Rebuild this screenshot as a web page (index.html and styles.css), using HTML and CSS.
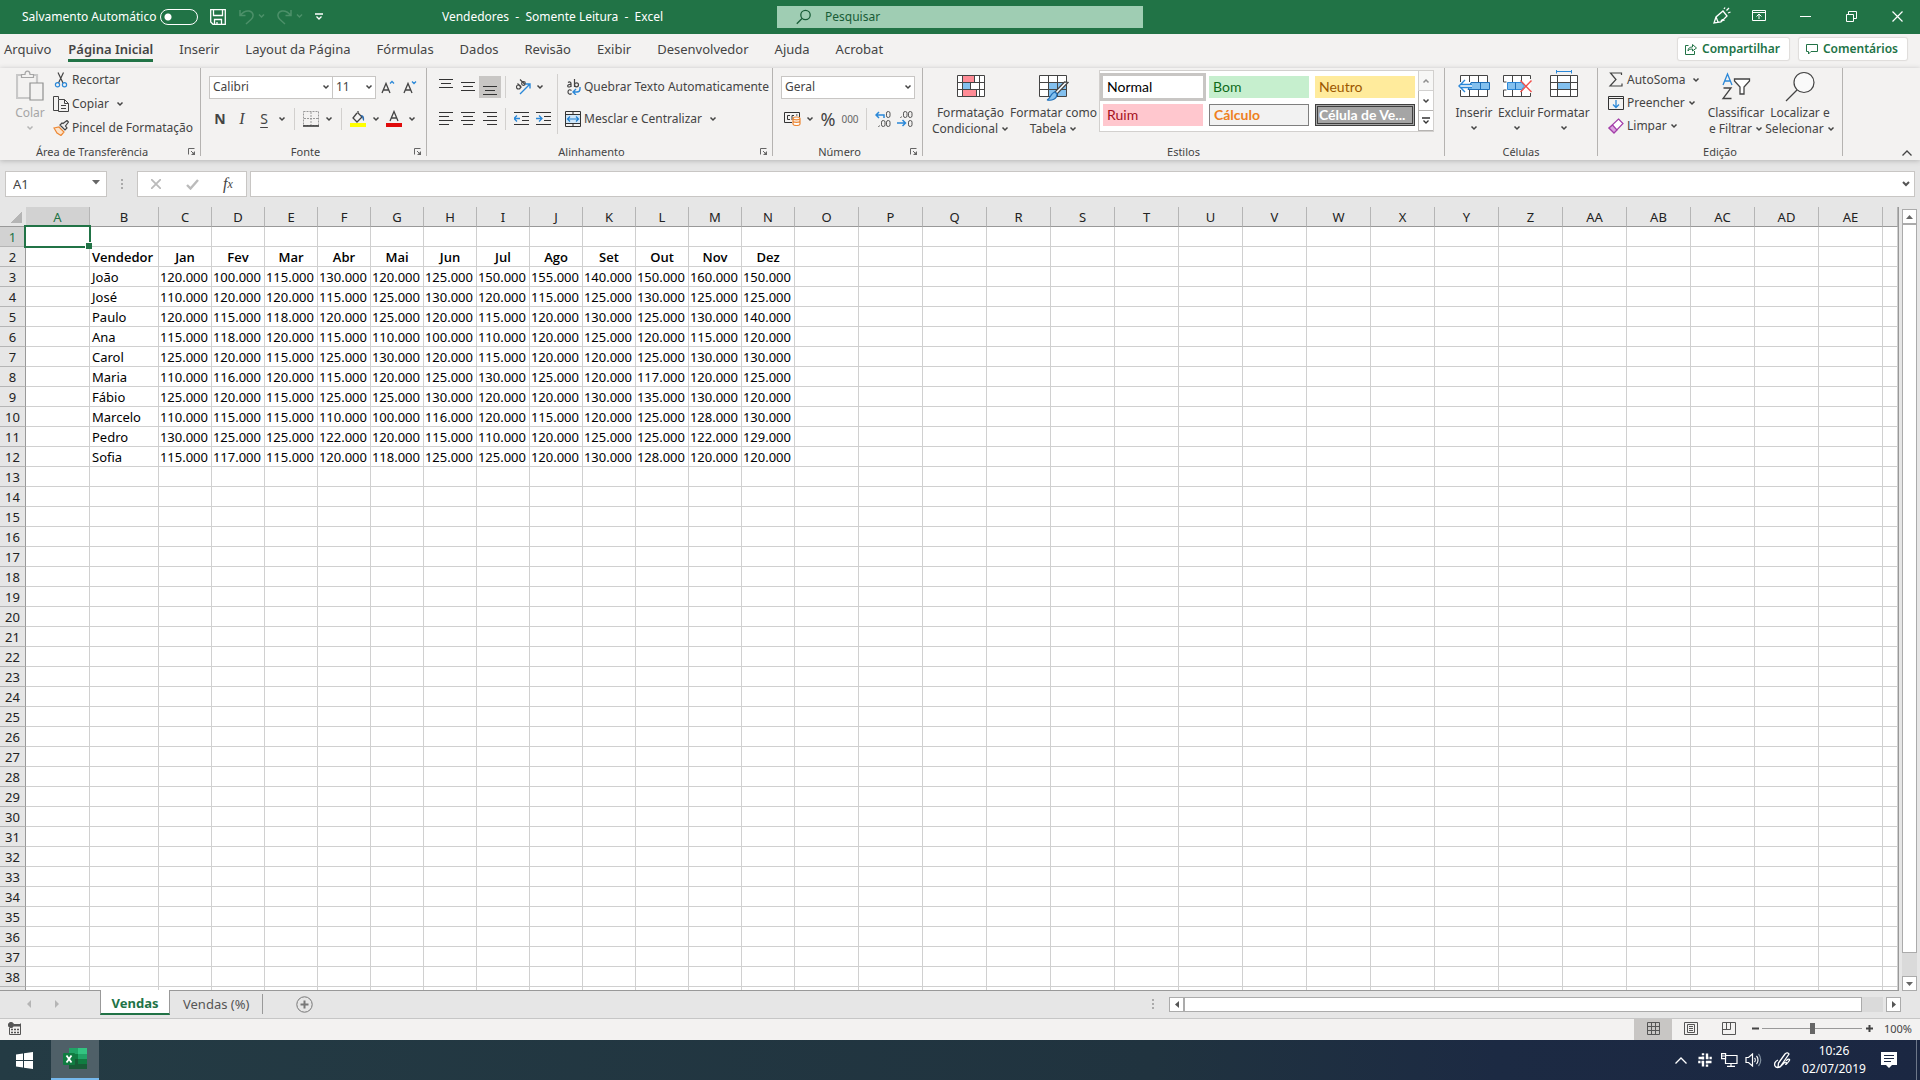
FILE: index.html
```html
<!DOCTYPE html>
<html lang="pt-BR">
<head>
<meta charset="utf-8">
<title>Vendedores - Somente Leitura - Excel</title>
<link rel="stylesheet" href="styles.css">
</head>
<body>
<svg class="sprite" aria-hidden="true">
  <symbol id="chev" viewBox="0 0 8 8"><path d="M1.5 2.5 4 5l2.500-2.500" fill="none" stroke="currentColor" stroke-width="1.500"/></symbol>
  <symbol id="launcher" viewBox="0 0 8 8"><path d="M.5 6.500v-6h6M3 3l3 3" fill="none" stroke="currentColor"/><path d="M7 3v4H3z" fill="currentColor"/></symbol>
</svg>

<header class="titlebar">
  <div class="title-left">
    <label class="autosave">Salvamento Automático <input type="checkbox" class="switch"></label>
    <button class="tb-btn" aria-label="Salvar"><svg width="16" height="16" viewBox="0 0 16 16" fill="none" stroke="currentColor" stroke-width="1.300"><path d="M.7.7h14.600v14.600H3L.7 13zM3.500 1v5.500h9V1M4.500 15v-4.500h7V15M7 15v-2"/></svg></button>
    <button class="tb-btn dim" aria-label="Desfazer"><svg width="26" height="16" viewBox="0 0 26 16" fill="none" stroke="currentColor" stroke-width="1.500"><path d="M1 1v5.500h5.500M1.500 6C4 3 7 1.500 10 2c5 1 5 6 2 8.500L7 15M20 5.500l2.500 2.500L25 5.500"/></svg></button>
    <button class="tb-btn dim" aria-label="Refazer"><svg width="26" height="16" viewBox="0 0 26 16" fill="none" stroke="currentColor" stroke-width="1.500"><path d="M14 1v5.500H8.500M13.500 6C11 3 8 1.500 5 2c-5 1-5 6-2 8.500L8 15M20 5.500l2.500 2.500L25 5.500"/></svg></button>
    <button class="tb-btn" aria-label="Personalizar"><svg width="8" height="8" viewBox="0 0 8 8" fill="none" stroke="currentColor" stroke-width="1.300"><path d="M0 1h8M1.500 3.500 4 6l2.500-2.500"/></svg></button>
    <h1 class="doc-title">Vendedores  -  Somente Leitura  -  Excel</h1>
  </div>
  <label class="search">
    <svg width="16" height="16" viewBox="0 0 16 16" fill="none" stroke="currentColor" stroke-width="1.300"><circle cx="9.500" cy="6" r="4.700"/><path d="M6 9.500.8 14.700"/></svg>
    <input type="text" placeholder="Pesquisar" aria-label="Pesquisar">
  </label>
  <div class="title-right">
    <button class="win-btn pen" aria-label="Novidades"><svg width="18" height="18" viewBox="0 0 18 18" fill="none" stroke="currentColor" stroke-width="1.300"><path d="m1 16 2-6 7-6 4 5-6 6zM3 10l2 5M8 15c0-3 3-3 3-1M11 2l1-1.500M13.500 3.500 16 1M15 6l2.500-1"/></svg></button>
    <button class="win-btn" aria-label="Opções da Faixa de Opções"><svg width="14" height="12" viewBox="0 0 14 12" fill="none" stroke="currentColor"><path d="M.5.5h13v10H.5zM.5 2.500h13M7 9V4M4.500 6.500 7 4l2.500 2.500"/></svg></button>
    <button class="win-btn" aria-label="Minimizar"><svg width="11" height="11" viewBox="0 0 11 11" stroke="currentColor"><path d="M0 5.500h11"/></svg></button>
    <button class="win-btn" aria-label="Restaurar"><svg width="11" height="11" viewBox="0 0 11 11" fill="none" stroke="currentColor"><path d="M.5 3.500h7v7h-7zM2.500 3V.500h8v7H8"/></svg></button>
    <button class="win-btn" aria-label="Fechar"><svg width="11" height="11" viewBox="0 0 11 11" stroke="currentColor" stroke-width="1.200"><path d="m.5.5 10 10m0-10-10 10"/></svg></button>
  </div>
</header>

<nav class="tabs">
  <button class="tab">Arquivo</button>
  <button class="tab active">Página Inicial</button>
  <button class="tab">Inserir</button>
  <button class="tab">Layout da Página</button>
  <button class="tab">Fórmulas</button>
  <button class="tab">Dados</button>
  <button class="tab">Revisão</button>
  <button class="tab">Exibir</button>
  <button class="tab">Desenvolvedor</button>
  <button class="tab">Ajuda</button>
  <button class="tab">Acrobat</button>
  <div class="tab-actions">
    <button class="pill"><svg width="12" height="12" viewBox="0 0 12 12" fill="none" stroke="currentColor"><path d="M3.500 2.500h-3v9h9V8M3 8c0-3 2-4 4.500-4V1.500l4 3.500-4 3V6C5 6 4 6.500 3 8z"/></svg>Compartilhar</button>
    <button class="pill"><svg width="12" height="12" viewBox="0 0 12 12" fill="none" stroke="currentColor"><path d="M.5 1.500h11v7H5L2.500 11V8.500h-2z"/></svg>Comentários</button>
  </div>
</nav>

<section class="ribbon" aria-label="Página Inicial">
  <div class="group g-clip">
    <div class="group-body">
      <button class="big paste" disabled>
        <svg width="28" height="32" viewBox="0 0 28 32" fill="#f3f2f1" stroke="#a6a6a6" stroke-width="1.200"><path d="M1 5h20v23H1z" stroke-width="2.200" stroke="#c8c8c8"/><path d="M5.500 7.500V4.500H9C9 0 14 0 14 4.500h3.500v3z"/><path d="M14 13h13v17H14z" stroke="#8f8f8f"/></svg>
        <span>Colar</span><svg class="chev"><use href="#chev"/></svg>
      </button>
      <div class="stack">
        <button class="cmd"><svg width="16" height="16" viewBox="0 0 16 16" fill="none" stroke="#444" stroke-width="1.200"><path d="M5 .5 10 11M10.500.500 5.500 11"/><g stroke="#2b88d8"><circle cx="4.500" cy="12.800" r="2.100"/><circle cx="11.500" cy="12.800" r="2.100"/></g></svg>Recortar</button>
        <button class="cmd"><svg width="16" height="16" viewBox="0 0 16 16" fill="none" stroke="#444"><path d="M5.500 3V.500h-5v14h5M5.500 3.500h6l4 4v8h-10zM11.500 3.500v4h4M8 9.500h5M8 12.500h5"/></svg>Copiar<svg class="chev gap"><use href="#chev"/></svg></button>
        <button class="cmd"><svg width="16" height="16" viewBox="0 0 16 16"><path d="m1 8 5-1 5 5-3 3.500L4 13z" fill="#fbe3cb" stroke="#ed8733" stroke-width="1.200"/><path d="m7 5 5 5 2-2-1.500-2 3-4-1.500-1.500-4 3L9 3z" fill="#eee" stroke="#444" stroke-width="1.200"/></svg>Pincel de Formatação</button>
      </div>
    </div>
    <div class="group-foot"><span>Área de Transferência</span><button class="launch" aria-label="Área de Transferência"><svg><use href="#launcher"/></svg></button></div>
  </div>
  <i class="gsep"></i>

  <div class="group g-font">
    <div class="group-body rows">
      <div class="row">
        <label class="combo font-name"><select aria-label="Fonte"><option>Calibri</option></select><svg class="chev"><use href="#chev"/></svg></label>
        <label class="combo font-size"><select aria-label="Tamanho da fonte"><option>11</option></select><svg class="chev"><use href="#chev"/></svg></label>
        <button class="ic" aria-label="Aumentar fonte"><svg width="14" height="14" viewBox="0 0 14 14" fill="none" stroke="#444" stroke-width="1.300"><path d="M1 13 5 3.500 9 13M2.500 10h5"/><path d="m9 3.500 2-2 2 2" stroke="#2b88d8"/></svg></button>
        <button class="ic" aria-label="Diminuir fonte"><svg width="14" height="14" viewBox="0 0 14 14" fill="none" stroke="#444" stroke-width="1.300"><path d="M1 13 5 3.500 9 13M2.500 10h5"/><path d="m9 1.500 2 2 2-2" stroke="#2b88d8"/></svg></button>
      </div>
      <div class="row">
        <button class="ic letter b">N</button>
        <button class="ic letter i">I</button>
        <button class="ic letter u">S</button>
        <button class="dd" aria-label="Sublinhado"><svg class="chev"><use href="#chev"/></svg></button>
        <i class="vsep"></i>
        <button class="ic" aria-label="Bordas"><svg width="16" height="16" viewBox="0 0 16 16" fill="none"><path d="M.5.5h15v14H.5zM8 1v13M1 7.500h14" stroke="#999" stroke-dasharray="2 1"/><path d="M0 15h16" stroke="#333" stroke-width="1.500"/></svg></button>
        <button class="dd" aria-label="Opções de borda"><svg class="chev"><use href="#chev"/></svg></button>
        <i class="vsep"></i>
        <button class="ic" aria-label="Cor de Preenchimento"><svg width="16" height="18" viewBox="0 0 16 18" fill="none"><path d="m7 3-4 5 4 4 5-5-4-4V1" stroke="#444" stroke-width="1.300"/><path d="M11 5c3 0 3.500 3 3 6-2-1-1-4-3-5z" fill="#2b6cb0"/><path d="M0 13h16v4H0z" fill="#ff0"/></svg></button>
        <button class="dd" aria-label="Cores de preenchimento"><svg class="chev"><use href="#chev"/></svg></button>
        <button class="ic" aria-label="Cor da Fonte"><svg width="16" height="18" viewBox="0 0 16 18" fill="none"><path d="m4 11 4-9.500L12 11M5.500 8h5" stroke="#444" stroke-width="1.300"/><path d="M0 13h16v4H0z" fill="#e00b0b"/></svg></button>
        <button class="dd" aria-label="Cores da fonte"><svg class="chev"><use href="#chev"/></svg></button>
      </div>
    </div>
    <div class="group-foot"><span>Fonte</span><button class="launch" aria-label="Fonte"><svg><use href="#launcher"/></svg></button></div>
  </div>
  <i class="gsep"></i>

  <div class="group g-align">
    <div class="group-body">
      <div class="rows">
        <div class="row">
          <button class="ic" aria-label="Alinhar em Cima"><svg width="14" height="16" viewBox="0 0 14 16" stroke="#333"><path d="M0 .5h14M2 4.500h10M0 8.500h14"/></svg></button>
          <button class="ic" aria-label="Alinhar no Meio"><svg width="14" height="16" viewBox="0 0 14 16" stroke="#333"><path d="M0 3.500h14M2 7.500h10M0 11.500h14"/></svg></button>
          <button class="ic on" aria-label="Alinhar Embaixo"><svg width="14" height="16" viewBox="0 0 14 16" stroke="#333"><path d="M0 7.500h14M2 11.500h10M0 15.500h14"/></svg></button>
          <i class="vsep"></i>
          <button class="ic wide" aria-label="Orientação"><svg width="18" height="16" viewBox="0 0 18 16" fill="none" stroke="#444" stroke-width="1.100"><circle cx="4.500" cy="8" r="2"/><path d="m3.500 4.500 4 4M6 .5l5 5"/><circle cx="9.500" cy="4.500" r="1.900"/><path d="M6 15 16 5M11.500 5H16v4.500" stroke="#2b88d8" stroke-width="1.400"/></svg><svg class="chev"><use href="#chev"/></svg></button>
        </div>
        <div class="row">
          <button class="ic" aria-label="Alinhar à Esquerda"><svg width="14" height="14" viewBox="0 0 14 14" stroke="#333"><path d="M0 .5h14M0 4.500h10M0 8.500h14M0 12.500h10"/></svg></button>
          <button class="ic" aria-label="Centralizar"><svg width="14" height="14" viewBox="0 0 14 14" stroke="#333"><path d="M0 .5h14M2 4.500h10M0 8.500h14M2 12.500h10"/></svg></button>
          <button class="ic" aria-label="Alinhar à Direita"><svg width="14" height="14" viewBox="0 0 14 14" stroke="#333"><path d="M0 .5h14M4 4.500h10M0 8.500h14M4 12.500h10"/></svg></button>
          <i class="vsep"></i>
          <button class="ic indent" aria-label="Diminuir Recuo"><svg width="15" height="14" viewBox="0 0 15 14" stroke="#333" fill="none"><path d="M0 .5h15M8 4.500h7M8 8.500h7M0 12.500h15"/><path d="M0 6.500h6M3 3.500l-3 3 3 3" stroke="#2b88d8" stroke-width="1.300"/></svg></button>
          <button class="ic" aria-label="Aumentar Recuo"><svg width="15" height="14" viewBox="0 0 15 14" stroke="#333" fill="none"><path d="M0 .5h15M8 4.500h7M8 8.500h7M0 12.500h15"/><path d="M0 6.500h6M3 3.500l3 3-3 3" stroke="#2b88d8" stroke-width="1.300"/></svg></button>
        </div>
      </div>
      <i class="vsep tall"></i>
      <div class="rows">
        <button class="cmd"><svg width="16" height="16" viewBox="0 0 16 16" fill="none" stroke="#444" stroke-width="1.200"><path d="M3 3.500c1.500-1 3-.5 3 1V8M6 5.500C2 5 2 8 4 8c1 0 2-1 2-1.500M9.500 0v8"/><circle cx="11.500" cy="5.800" r="2"/><path d="M6.500 11.500c-2-1.500-3.500-.5-3.500 1.500s2 3 3.500 1.500"/><path d="M15 8v2c0 2-1 3-3 3H8m3-3-3 3 3 3" stroke="#2b88d8" stroke-width="1.400"/></svg>Quebrar Texto Automaticamente</button>
        <button class="cmd"><svg width="16" height="16" viewBox="0 0 16 16" fill="none" stroke="#333"><path d="M1 4h14v8H1z" fill="#cfe6f8" stroke="none"/><path d="M.5.5h15v15H.5zM.5 3.500h15M.5 12.500h15M8 .5v3M8 12.500v3"/><path d="M2.500 8h11M5 5.500 2.500 8 5 10.500M11 5.500 13.500 8 11 10.500" stroke="#1f7fd0" stroke-width="1.200"/></svg>Mesclar e Centralizar<svg class="chev gap"><use href="#chev"/></svg></button>
      </div>
    </div>
    <div class="group-foot"><span>Alinhamento</span><button class="launch" aria-label="Alinhamento"><svg><use href="#launcher"/></svg></button></div>
  </div>
  <i class="gsep"></i>

  <div class="group g-num">
    <div class="group-body rows">
      <div class="row">
        <label class="combo num-format"><select aria-label="Formato de Número"><option>Geral</option></select><svg class="chev"><use href="#chev"/></svg></label>
      </div>
      <div class="row">
        <button class="ic" aria-label="Formato de Contabilização"><svg width="17" height="14" viewBox="0 0 17 14" fill="none" stroke="#333"><path d="M8 10.500H.5v-10h15V5M6 3.500H3.500v4H6M8 8V3.500h2M12 3h1.500"/><path d="M9 6.500c0-2 7-2 7 0v5.500c0 2-7 2-7 0zm0 0c0 1.700 7 1.700 7 0M9 9c0 1.700 7 1.700 7 0" fill="#fff" stroke="#ed8733" stroke-width="1.200"/></svg></button>
        <button class="dd" aria-label="Moedas"><svg class="chev"><use href="#chev"/></svg></button>
        <button class="ic pct">%</button>
        <button class="ic thou">000</button>
        <i class="vsep"></i>
        <button class="ic dec" aria-label="Aumentar Casas Decimais"><svg width="16" height="16" viewBox="0 0 16 16" fill="none" stroke="#555"><rect x="11.500" y=".5" width="3.500" height="6" rx="1.700"/><rect x="6.500" y="9.500" width="3.500" height="6" rx="1.700"/><rect x="11.500" y="9.500" width="3.500" height="6" rx="1.700"/><path d="M4.500 14.500 3.500 16"/><path d="M9 7V4H1M4 1 1 4l3 3" stroke="#2b88d8" stroke-width="1.500"/></svg></button>
        <button class="ic" aria-label="Diminuir Casas Decimais"><svg width="16" height="16" viewBox="0 0 16 16" fill="none" stroke="#555"><rect x="6.500" y=".5" width="3.500" height="6" rx="1.700"/><rect x="11.500" y=".5" width="3.500" height="6" rx="1.700"/><rect x="11.500" y="9.500" width="3.500" height="6" rx="1.700"/><path d="M4.500 5.500 3.500 7"/><path d="M0 12h8M5.500 9l3 3-3 3" stroke="#2b88d8" stroke-width="1.500"/></svg></button>
      </div>
    </div>
    <div class="group-foot"><span>Número</span><button class="launch" aria-label="Número"><svg><use href="#launcher"/></svg></button></div>
  </div>
  <i class="gsep"></i>

  <div class="group g-style">
    <div class="group-body">
      <button class="big two">
        <svg width="30" height="32" viewBox="0 0 30 32" fill="none"><path d="M1.500 5.500h27v21h-27z" fill="#fff"/><path d="M7 5.500h12v7H7zM7 19.500h14v7H7z" fill="#ff8c96"/><path d="M7 12.500h8v7H7z" fill="#83c0ee"/><path d="M1.500 5.500h27v21h-27zM1.500 12.500h27M1.500 19.500h27M6.500 5.500v21M23.500 5.500v21M18.500 5.500v7M14.500 12.500v7M20.500 19.500v7" stroke="#444"/></svg>
        <span>Formatação</span><span>Condicional <svg class="chev"><use href="#chev"/></svg></span>
      </button>
      <button class="big two">
        <svg width="30" height="32" viewBox="0 0 30 32" fill="none"><path d="M.5 5.500h27v21H.5z" fill="#fff"/><path d="M9.500 12.500h18v14h-18z" fill="#83c0ee"/><path d="M.5 5.500h27v21H.5zM.5 12.500h27M.5 19.500h27M9.500 5.500v21M18.500 5.500v21" stroke="#444"/><path d="M29 12.500 18 24l-2-2 9.500-10z" fill="#fff" stroke="#444" stroke-width="1.200"/><path d="M18 24c0 5-5 7-10 6 4-1 3-7 8-8z" fill="#83c0ee" stroke="#1f6fb8" stroke-width="1.200"/></svg>
        <span>Formatar como</span><span>Tabela <svg class="chev"><use href="#chev"/></svg></span>
      </button>
      <div class="gallery">
        <div class="styles">
          <button class="st normal">Normal</button>
          <button class="st good">Bom</button>
          <button class="st neutral">Neutro</button>
          <button class="st bad">Ruim</button>
          <button class="st calc">Cálculo</button>
          <button class="st check">Célula de Ve...</button>
        </div>
        <div class="gal-scroll">
          <button aria-label="Linha anterior" disabled><svg class="chev flip"><use href="#chev"/></svg></button>
          <button aria-label="Próxima linha"><svg class="chev"><use href="#chev"/></svg></button>
          <button aria-label="Mais"><svg width="8" height="8" viewBox="0 0 8 8" fill="none" stroke="#333" stroke-width="1.300"><path d="M0 1h8M1.500 3.500 4 6l2.500-2.500"/></svg></button>
        </div>
      </div>
    </div>
    <div class="group-foot"><span>Estilos</span></div>
  </div>
  <i class="gsep"></i>

  <div class="group g-cells">
    <div class="group-body">
      <button class="big ins"><svg width="32" height="32" viewBox="0 0 32 32" fill="none"><path d="M2.500 5.500h27v21h-27z" fill="#fff"/><path d="M2.500 12V5.500h27V12M2.500 20v6.500h27V20M11.500 5.500V12M20.500 5.500V12M11.500 20v6.500M20.500 20v6.500" stroke="#444"/><path d="M13 12.500h18.500v7H10z" fill="#83c0ee" stroke="#1f6fb8"/><path d="M22.500 12.500v7" stroke="#1f6fb8"/><path d="M14 14.500H4v3h10z" fill="#fff"/><path d="M14 14.500H3M14 17.500H3M7 10l-6 6 6 6" stroke="#2b88d8" stroke-width="1.400"/></svg><span>Inserir</span><svg class="chev"><use href="#chev"/></svg></button>
      <button class="big del"><svg width="32" height="32" viewBox="0 0 32 32" fill="none"><path d="M2.500 5.500h27v21h-27z" fill="#fff"/><path d="M2.500 12V5.500h27V9M2.500 20v6.500h27V23M2.500 12h3M2.500 20h3M11.500 5.500V12M20.500 5.500V12M11.500 20v6.500M20.500 20v6.500" stroke="#444"/><path d="M6.500 12.500h14l3 3.500-3 3.500h-14z" fill="#83c0ee" stroke="#2b88d8"/><path d="M14.500 12.500v7" stroke="#1f6fb8"/><path d="m19.500 10.500 11 11.500m0-11.500-11 11.500" stroke="#f0504c" stroke-width="1.400"/></svg><span>Excluir</span><svg class="chev"><use href="#chev"/></svg></button>
      <button class="big fmt"><svg width="32" height="32" viewBox="0 0 32 32" fill="none"><path d="M2.500 5.500h27v21h-27z" fill="#fff"/><path d="M9.500 12.500h13v7h-13z" fill="#83c0ee"/><path d="M2.500 5.500h27v21h-27zM2.500 12.500h27M2.500 19.500h27M9.500 5.500v21M22.500 5.500v21" stroke="#444"/><path d="M8 1.500h16M8.500 0v3.500M23.500 0v3.500" stroke="#2b88d8"/></svg><span>Formatar</span><svg class="chev"><use href="#chev"/></svg></button>
    </div>
    <div class="group-foot"><span>Células</span></div>
  </div>
  <i class="gsep"></i>

  <div class="group g-edit">
    <div class="group-body">
      <div class="stack">
        <button class="cmd"><svg width="16" height="16" viewBox="0 0 16 16" fill="none" stroke="#444" stroke-width="1.200"><path d="M13.500 3V1H2.500L8 7.500 2 14h12v-2.500"/></svg>AutoSoma<svg class="chev gap"><use href="#chev"/></svg></button>
        <button class="cmd"><svg width="16" height="16" viewBox="0 0 16 16" fill="none" stroke="#333"><path d="M.5 1.500h15v13H.5zM.5 3.500h15"/><path d="M8 5v7.500M5 9.500l3 3 3-3" stroke="#2b88d8" stroke-width="1.300"/></svg>Preencher<svg class="chev"><use href="#chev"/></svg></button>
        <button class="cmd"><svg width="16" height="16" viewBox="0 0 16 16" fill="#fff" stroke="#a33ea8" stroke-width="1.200"><path d="m10.500 1 4.500 4.500-9 9.500L1 10z"/><path d="m4.500 7 4.500 5-3 3-5-5z" fill="#dba3e0"/></svg>Limpar<svg class="chev"><use href="#chev"/></svg></button>
      </div>
      <button class="big sort"><svg width="30" height="32" viewBox="0 0 30 32" fill="none" stroke-width="1.300"><path d="M2 15 6.500 4 11 15M3.500 11h6" stroke="#2b88d8"/><path d="M2.500 18H10L2 28.500h8.500" stroke="#444"/><path d="M13.500 9h15v2L23 17v7h-4v-7l-5.500-6z" fill="#fff" stroke="#444"/></svg><span>Classificar</span><span>e Filtrar <svg class="chev"><use href="#chev"/></svg></span></button>
      <button class="big find"><svg width="30" height="32" viewBox="0 0 30 32" fill="none" stroke="#444" stroke-width="1.200"><circle cx="19" cy="12.500" r="10" fill="#fafafa"/><path d="M12 20 1 31"/></svg><span>Localizar e</span><span>Selecionar <svg class="chev"><use href="#chev"/></svg></span></button>
    </div>
    <div class="group-foot"><span>Edição</span></div>
  </div>
  <i class="gsep"></i>
  <button class="collapse" aria-label="Recolher a Faixa de Opções"><svg width="10" height="6" viewBox="0 0 10 6" fill="none" stroke="#444" stroke-width="1.300"><path d="m.5 5.500 4.500-4.500 4.500 4.500"/></svg></button>
</section>

<section class="formula">
  <div class="namebox"><input type="text" value="A1" aria-label="Caixa de Nome"><button aria-label="Nomes"><svg width="8" height="5" viewBox="0 0 8 5"><path d="M0 0h8L4 4.500z" fill="#666"/></svg></button></div>
  <i class="dots"></i>
  <div class="fx">
    <button aria-label="Cancelar"><svg width="10" height="10" viewBox="0 0 10 10" stroke="#bbb" stroke-width="1.800"><path d="m0 0 10 10M10 0 0 10"/></svg></button>
    <button aria-label="Inserir"><svg width="13" height="11" viewBox="0 0 13 11" fill="none" stroke="#bbb" stroke-width="2.400"><path d="m1 6 3.500 3.500L12 1"/></svg></button>
    <button class="fx-btn" aria-label="Inserir Função">f<sub>x</sub></button>
  </div>
  <div class="fbar"><input type="text" aria-label="Barra de Fórmulas"><button aria-label="Expandir"><svg width="8" height="6" viewBox="0 0 8 6" fill="none" stroke="#555" stroke-width="2"><path d="m1 1 3 3 3-3"/></svg></button></div>
</section>

<main class="workspace">
  <div class="sheet">
    <table class="grid" id="grid"></table>
  </div>
  <div class="vscroll">
    <button aria-label="Rolar para cima"><svg width="7" height="4" viewBox="0 0 7 4"><path d="M0 4h7L3.500 0z" fill="#666"/></svg></button>
    <div class="vtrack"><div class="vthumb"></div></div>
    <button aria-label="Rolar para baixo"><svg width="7" height="4" viewBox="0 0 7 4"><path d="M0 0h7L3.500 4z" fill="#666"/></svg></button>
  </div>
</main>

<div class="sheetbar">
  <button class="nav" aria-label="Planilha anterior"><svg width="4" height="8" viewBox="0 0 4 8"><path d="M4 0v8L0 4z" fill="#b5b5b5"/></svg></button>
  <button class="nav" aria-label="Próxima planilha"><svg width="4" height="8" viewBox="0 0 4 8"><path d="M0 0v8l4-4z" fill="#b5b5b5"/></svg></button>
  <button class="stab current">Vendas</button>
  <button class="stab">Vendas (%)</button>
  <button class="add" aria-label="Nova planilha"><svg width="17" height="17" viewBox="0 0 17 17" fill="none" stroke="#777"><circle cx="8.500" cy="8.500" r="7.700"/><path d="M8.500 4.500v8M4.500 8.500h8" stroke-width="2"/></svg></button>
  <i class="dots"></i>
  <div class="hscroll">
    <button aria-label="Rolar para a esquerda"><svg width="4" height="7" viewBox="0 0 4 7"><path d="M4 0v7L0 3.500z" fill="#555"/></svg></button>
    <div class="htrack"><div class="hthumb"></div></div>
    <button aria-label="Rolar para a direita"><svg width="4" height="7" viewBox="0 0 4 7"><path d="M0 0v7l4-3.500z" fill="#555"/></svg></button>
  </div>
</div>

<footer class="status">
  <button class="macro" aria-label="Gravar Macro"><svg width="13" height="13" viewBox="0 0 13 13" fill="none" stroke="#555"><path d="M1.500 6v6.500h11v-11"/><path d="M6 2h7v2.500H6z" fill="#555" stroke="none"/><path d="M3 7.500h8.500M3 10.500h8.500" stroke-width="1.500" stroke-dasharray="2 1"/><circle cx="3" cy="3" r="2.600" fill="#555"/></svg></button>
  <button class="view on" aria-label="Normal"><svg width="13" height="13" viewBox="0 0 13 13" fill="none" stroke="#555"><path d="M.5.500h12v12H.5zM.5 4.500h12M.5 8.500h12M4.500.500v12M8.500.500v12"/></svg></button>
  <button class="view" aria-label="Layout da Página"><svg width="14" height="13" viewBox="0 0 14 13" fill="none" stroke="#555"><path d="M.5.500h13v12H.5zM3.500 2.500h7v8h-7zM5 4.500h4M5 6.500h4M5 8.500h4"/></svg></button>
  <button class="view" aria-label="Visualização de Quebra de Página"><svg width="14" height="13" viewBox="0 0 14 13" fill="none" stroke="#555"><path d="M.5.500h13v12H.5zM.5 7.500h8v-7M4.500.500v7"/></svg></button>
  <button class="zm" aria-label="Reduzir"><svg width="7" height="7" viewBox="0 0 7 7" stroke="#444" stroke-width="2"><path d="M0 3.500h7"/></svg></button>
  <input type="range" class="zoom" min="0" max="100" value="50" aria-label="Zoom">
  <button class="zm" aria-label="Ampliar"><svg width="7" height="7" viewBox="0 0 7 7" stroke="#444" stroke-width="2"><path d="M0 3.500h7M3.500 0v7"/></svg></button>
  <span class="pctlabel">100%</span>
</footer>

<nav class="taskbar">
  <button class="start" aria-label="Iniciar"><svg width="17" height="17" viewBox="0 0 17 17" fill="#fff"><path d="M0 2.500 7 1.500V8H0zM8 1.300 17 0v8H8zM0 9h7v6.500l-7-1zM8 9h9v8l-9-1.300z"/></svg></button>
  <button class="app" aria-label="Excel"><svg width="24" height="22" viewBox="0 0 24 22"><path d="M6 0h9v6H6z" fill="#21a366"/><path d="M15 0h9v6h-9z" fill="#33c481"/><path d="M6 6h9v5H6z" fill="#107c41"/><path d="M15 6h9v5h-9z" fill="#21a366"/><path d="M6 11h18v10H6z" fill="#185c37"/><path d="M15 11h9v5h-9z" fill="#107c41"/><rect y="5" width="12" height="12" rx="1" fill="#107c41"/><path d="m3.500 7.500 5 7m0-7-5 7" stroke="#fff" stroke-width="1.800"/></svg></button>
  <div class="tray">
    <button aria-label="Mostrar ícones ocultos"><svg width="12" height="7" viewBox="0 0 12 7" fill="none" stroke="#fff" stroke-width="1.300"><path d="m.5 6.500 5.500-5.500 5.500 5.500"/></svg></button>
    <button aria-label="Slack"><svg width="14" height="14" viewBox="0 0 14 14" fill="none" stroke="#fff" stroke-width="2.400"><path d="M5 3.500V6.500M5 .2v2M.5 5h5.500M9 .5V6M8 5h2.500M11.500 5h2.300M.2 9h2.300M3.500 9H6M5 8v5.500M8 9h5.500M9 8v2.500M9 11.500v2.300"/></svg></button>
    <button aria-label="Rede"><svg width="17" height="14" viewBox="0 0 17 14" fill="none" stroke="#fff" stroke-width="1.200"><path d="M5 2.500h11v8H4.500V6M.6.600h4v5h-4zM1 3h3M10 10.500V13M6 13.400h8"/></svg></button>
    <button aria-label="Volume"><svg width="17" height="14" viewBox="0 0 17 14" fill="none" stroke="#fff" stroke-width="1.200"><path d="M1 4.500h2.500l4-3.500v12l-4-3.500H1zM9.500 5c1 1 1 3 0 4M11.500 3c2 2 2 6 0 8"/><path d="M13.500 1c3 3.500 3 8.500 0 12" stroke="#8090a0"/></svg></button>
    <button class="ink" aria-label="Windows Ink"><svg width="17" height="17" viewBox="0 0 17 17" fill="none" stroke="#fff" stroke-width="1.300"><path d="M6 15 15 2c-1-2-3-1-4 0L4.500 11 4 15zM4 8c-3 1-4 4-3 6s4 2 6 0l3-3c2-2 3 0 2 1s1 0 3-3c2-2-1-3-3 0"/></svg></button>
    <div class="clock"><time>10:26</time><time>02/07/2019</time></div>
    <button class="note" aria-label="Central de ações"><svg width="16" height="16" viewBox="0 0 16 16"><path d="M0 0h16v13h-5l-3 3-3-3H0z" fill="#fff"/><path d="M3 3.500h10M3 6.500h10M3 9.500h7" stroke="#1b2742"/></svg></button>
    <i class="peek"></i>
  </div>
</nav>
<script src="script.js"></script>
</body>
</html>
```

FILE: styles.css
```css
* { box-sizing: border-box; }

body {
  margin: 0;
  height: 100vh;
  min-width: 1280px;
  display: flex;
  flex-direction: column;
  overflow: hidden;
  background: #e6e6e6;
  color: #444;
  font: 12px/16px "Noto Sans", "Open Sans", sans-serif;
}

button, input, select { font: inherit; color: inherit; }
button { border: 0; padding: 0; background: none; display: flex; align-items: center; white-space: nowrap; }
input { border: 0; padding: 0; outline: 0; background: none; min-width: 0; }
svg { flex: none; }
i { flex: none; }
.sprite { display: none; }
.chev { width: 8px; height: 8px; color: #444; }
.gap { margin-left: 8px; }
.flip { transform: rotate(180deg); }

/* Title bar */
.titlebar { display: grid; grid-template-columns: 1fr 366px 1fr; align-items: center; height: 34px; flex: none; background: #217346; color: #fff; }
.title-left { display: flex; align-items: center; padding-left: 22px; height: 34px; }
.autosave { display: flex; align-items: center; gap: 4px; margin-right: 12px; }
.switch { appearance: none; margin: 0; width: 38px; height: 16px; border: 1px solid #fff; border-radius: 8px; background: radial-gradient(circle at 7px 7px, #fff 3px, transparent 4px); }
.tb-btn { margin-right: 13px; }
.dim { color: #4c9069; margin-right: 12px; }
.doc-title { margin: 0 114px 0 auto; font-size: 12px; font-weight: 400; white-space: pre; }
.search { display: flex; align-items: center; height: 22px; padding-left: 19px; gap: 13px; background: #9fcdb3; color: #185c37; }
.search input { flex: 1; }
.search input::placeholder { color: #185c37; opacity: 1; }
.title-right { display: flex; justify-content: flex-end; }
.win-btn { width: 46px; height: 34px; padding-bottom: 2px; justify-content: center; }
.pen { width: 28px; }

/* Ribbon tabs */
.tabs { display: flex; align-items: flex-start; height: 34px; flex: none; background: #f3f2f1; font-size: 13px; }
.tab { margin: 5px 13px 0; height: 23px; border-bottom: 3px solid transparent; }
.tab:first-child { margin-left: 4px; margin-right: 4px; }
.tab.active { border-color: #217346; font-weight: 600; }
.tab-actions { display: flex; gap: 10px; margin: 4px 13px 0 auto; }
.pill { height: 22px; padding: 0 9px 0 7px; gap: 5px; background: #fff; color: #217346; font-size: 12px; font-weight: 600; border-radius: 2px; box-shadow: 0 0 1px 1px #dedcda; }

/* Ribbon body */
.ribbon { display: flex; align-items: flex-start; height: 92px; flex: none; background: #f3f2f1; box-shadow: 0 1px 5px #b5b5b5; z-index: 1; }
.gsep { width: 1px; height: 88px; background: #b5b3b1; }
.group { height: 92px; display: flex; flex-direction: column; flex: none; }
.group-body { flex: 1; display: flex; align-items: flex-start; }
.group-foot { display: flex; height: 16px; font-size: 11px; }
.group-foot span { flex: 1; text-align: center; }
.launch { width: 16px; justify-content: center; color: #666; }
.launch svg { width: 8px; height: 8px; }
.g-clip { width: 200px; }
.g-font { width: 225px; }
.g-align { width: 345px; }
.g-num { width: 149px; }
.g-style { width: 521px; }
.g-cells { width: 152px; }
.g-edit { width: 244px; }

.big { flex-direction: column; padding-top: 2px; }
.big > svg:first-child { height: 32px; margin-bottom: 3px; }
.big > .chev { margin-top: 3px; }
.big span { display: flex; align-items: center; gap: 3px; }
.paste { width: 46px; margin-left: 7px; color: #a6a6a6; }
.paste .chev { color: #b5b5b5; }
.stack .cmd { height: 24px; }
.cmd { height: 22px; gap: 3px; }
.cmd > .gap { margin-left: 4px; }

.rows { display: flex; flex-direction: column; gap: 10px; padding-top: 8px; }
.row { display: flex; align-items: center; height: 22px; }
.g-font .rows, .g-font .group-body, .g-align .group-body, .g-num .group-body { padding-left: 8px; }
.ic { width: 22px; height: 22px; justify-content: center; }
.ic.on { background: #c8c6c4; }
.ic.wide { width: 38px; gap: 4px; }
.dd { width: 14px; height: 22px; justify-content: center; }
.vsep { width: 1px; height: 22px; margin: 0 5px; background: #d2d0ce; }
.g-align .row .vsep { margin: 0 4px; }
.vsep.tall { height: 60px; margin: 6px 7px 0 3px; }
.letter { font-size: 14px; }
.b { font-weight: 700; }
.letter.i { font-family: "Liberation Serif", serif; font-style: italic; font-size: 16px; }
.u { text-decoration: underline; text-underline-offset: 3px; }
.pct { font-size: 18px; }
.thou { font-size: 10px; color: #666; }

.combo { display: grid; height: 23px; background: #fff; border: 1px solid #c8c6c4; }
.combo > * { grid-area: 1 / 1; }
.combo select { appearance: none; border: 0; background: none; padding: 0 3px; width: 100%; }
.combo .chev { justify-self: end; align-self: center; margin-right: 2px; pointer-events: none; }
.font-name { width: 124px; }
.font-size { width: 43px; margin-right: 1px; border-left: 0; }
.num-format { width: 134px; }

.two { width: 83px; }
.g-style .group-body { padding-left: 6px; }
.gallery { display: flex; margin: 2px 0 0 4px; height: 62px; border: 1px solid #d2d0ce; background: #fff; }
.styles { display: grid; grid-template-columns: repeat(3, 100px); grid-auto-rows: 22px; gap: 6px; padding: 5px 3px; }
.st { padding: 0 4px; font: 14px/20px Lato, sans-serif; }
.normal { color: #000; box-shadow: 0 0 0 3px #c8c6c4; background: #fff; }
.good { background: #c6efce; color: #0f6b1a; }
.neutral { background: #ffeb9c; color: #9c5700; }
.bad { background: #ffc7ce; color: #a5101c; }
.calc { background: #f2f2f2; color: #ee8022; border: 1px solid #7f7f7f; font-weight: 700; }
.check { background: #a5a5a5; color: #fff; border: 3px double #3f3f3f; padding: 0 1px; font-weight: 700; }
.gal-scroll { display: flex; flex-direction: column; width: 15px; }
.gal-scroll button { flex: 1; justify-content: center; border: solid #b5b3b1; border-width: 0 0 1px 1px; background: #fff; }
.gal-scroll button:disabled { background: #f3f2f1; opacity: .6; }

.g-cells .group-body { padding-left: 8px; }
.ins { width: 42px; }
.del { width: 43px; }
.fmt { width: 51px; }
.g-edit .group-body { padding-left: 10px; }
.g-edit .stack { width: 97px; }
.g-edit .stack .cmd { height: 23px; }
.sort { width: 62px; }
.find { width: 66px; }
.collapse { margin: 82px 8px 0 auto; }

/* Formula bar */
.formula { display: flex; align-items: center; height: 47px; flex: none; padding: 1px 5px 0; }
.namebox, .fx, .fbar { display: flex; height: 26px; background: #fff; border: 1px solid #c8c6c4; }
.namebox { width: 102px; padding-left: 7px; font-size: 13px; }
.namebox input { flex: 1; }
.namebox button { width: 20px; justify-content: center; padding-bottom: 4px; }
.dots { width: 2px; height: 11px; background: repeating-linear-gradient(#aaa 0 2px, transparent 2px 4px); }
.formula .dots { margin: 0 14px; }
.fx { width: 110px; margin-right: 3px; }
.fx button { flex: 1; justify-content: center; }
.fx .fx-btn { font: italic 16px/20px "Liberation Serif", serif; color: #444; }
.fx-btn sub { font-size: 12px; }
.fbar { flex: 1; }
.fbar input { flex: 1; }
.fbar button { width: 17px; justify-content: center; }

/* Worksheet */
.workspace { flex: 1; min-height: 0; display: flex; }
.sheet { flex: 1; min-width: 0; overflow: hidden; border-right: 1px solid #999; border-bottom: 1px solid #999; }
.grid { table-layout: fixed; width: 100%; border-collapse: separate; border-spacing: 0; background: #fff; font: 13px/17px "Noto Sans", sans-serif; color: #000; }
.grid tr { height: 20px; }
.grid th, .grid td { height: 20px; padding: 2px 3px 0; border: solid #d0d0d0; border-width: 0 1px 1px 0; overflow: hidden; white-space: nowrap; }
.grid thead th { padding-top: 1px; background: #e6e6e6; border-bottom-color: #999; border-right-color: #b5b5b5; font-weight: 400; color: #222; }
.grid .rowno { background: #e6e6e6; border-right-color: #999; border-bottom-color: #b5b5b5; font-weight: 400; color: #222; padding-left: 0; padding-right: 0; }
.grid .corner { background: linear-gradient(135deg, transparent 50%, #b5b5b5 50%) 11px 4px / 11px 12px no-repeat #e6e6e6; border-right-color: #e6e6e6; }
.grid .sel { background: #d2d2d2; color: #217346; }
.grid .month { text-align: center; font: 600 13px/17px "Open Sans", sans-serif; padding-left: 0; padding-right: 0; }
.grid .name { text-align: left; padding-left: 2px; padding-right: 0; }
.grid .name b { font: 600 13px/17px "Open Sans", sans-serif; }
.grid .num { text-align: right; padding-left: 0; }
.grid td.cursor { position: relative; overflow: visible; }
.cursor::before { content: ""; position: absolute; inset: -2px -2px -2px -2px; border: 2px solid #217346; }
.cursor::after { content: ""; position: absolute; right: -3px; bottom: -3px; width: 6px; height: 6px; background: #217346; border: solid #fff; border-width: 1px 0 0 1px; }
.c-row { width: 26px; }
.c-a, .c-wide { width: 64px; }
.c-b { width: 69px; }
.c-month { width: 53px; }

.vscroll { width: 15px; margin: 2px 3px 0; display: flex; flex-direction: column; }
.vscroll button, .hscroll button { width: 15px; height: 15px; justify-content: center; background: #fff; border: 1px solid #ababab; }
.vtrack { flex: 1; background: #dadada; }
.vthumb { height: 97%; background: #fff; border: 1px solid #ababab; }

/* Sheet tabs */
.sheetbar { display: flex; height: 28px; flex: none; border-bottom: 1px solid #c6c6c6; font-size: 13px; }
.nav { width: 28px; height: 25px; justify-content: center; }
.nav:first-child { margin-left: 15px; }
.stab { height: 25px; padding: 2px 13px 0; margin-top: -1px; color: #555; }
.stab.current { width: 70px; padding: 2px 0 0; justify-content: center; margin-left: 29px; background: #fff; color: #217346; font-weight: 700; border: solid #999; border-width: 0 1px; border-bottom: 2px solid #217346; z-index: 1; }
.stab + .stab::after { content: ""; width: 1px; height: 20px; margin-left: 13px; margin-right: -13px; background: #999; }
.add { margin-left: 33px; height: 26px; }
.sheetbar .dots { margin: 8px 15px 0 auto; }
.hscroll { display: flex; width: 732px; height: 15px; margin: 6px 19px 0 0; }
.htrack { flex: 1; margin-right: 3px; background: #dadada; }
.hthumb { width: 97%; height: 15px; background: #fff; border: 1px solid #ababab; }

/* Status bar */
.status { display: flex; align-items: center; height: 21px; flex: none; padding: 0 8px 2px 0; background: #f3f2f1; }
.macro { margin: 0 auto 0 8px; }
.view { width: 38px; height: 21px; margin-bottom: -2px; padding-bottom: 2px; justify-content: center; }
.view.on { background: #c8c6c4; }
.zm { width: 14px; justify-content: center; }
.zoom { appearance: none; width: 100px; height: 13px; margin: 0; background: linear-gradient(#999, #999) center / 100% 1px no-repeat; }
.zoom::-webkit-slider-thumb { appearance: none; width: 5px; height: 11px; background: #666; }
.pctlabel { width: 36px; text-align: right; font-size: 11px; }

/* Taskbar */
.taskbar { display: flex; height: 40px; flex: none; color: #fff; background: linear-gradient(90deg, #243b44 0%, #20333f 60%, #1c2a43 78%, #1b2742 100%); }
.start { width: 51px; padding-left: 16px; }
.app { width: 48px; justify-content: center; background: #4f6068; border-bottom: 2px solid #76b9ed; }
.tray { display: flex; margin-left: auto; }
.tray button { width: 24px; justify-content: center; }
.tray .ink { width: 34px; }
.clock { display: flex; flex-direction: column; width: 70px; padding-top: 2px; text-align: center; }
.clock time { line-height: 18px; }
.tray .note { width: 39px; }
.peek { width: 1px; margin: 0 3px 0 8px; background: #6d7789; }
```

FILE: script.js
```js
const months = ["Jan", "Fev", "Mar", "Abr", "Mai", "Jun", "Jul", "Ago", "Set", "Out", "Nov", "Dez"];
// Sales per seller, in thousands, January to December.
const sales = [
  ["João", 120, 100, 115, 130, 120, 125, 150, 155, 140, 150, 160, 150],
  ["José", 110, 120, 120, 115, 125, 130, 120, 115, 125, 130, 125, 125],
  ["Paulo", 120, 115, 118, 120, 125, 120, 115, 120, 130, 125, 130, 140],
  ["Ana", 115, 118, 120, 115, 110, 100, 110, 120, 125, 120, 115, 120],
  ["Carol", 125, 120, 115, 125, 130, 120, 115, 120, 120, 125, 130, 130],
  ["Maria", 110, 116, 120, 115, 120, 125, 130, 125, 120, 117, 120, 125],
  ["Fábio", 125, 120, 115, 125, 125, 130, 120, 120, 130, 135, 130, 120],
  ["Marcelo", 110, 115, 115, 110, 100, 116, 120, 115, 120, 125, 128, 130],
  ["Pedro", 130, 125, 125, 122, 120, 115, 110, 120, 125, 125, 122, 129],
  ["Sofia", 115, 117, 115, 120, 118, 125, 125, 120, 130, 128, 120, 120]
];
const LETTERS = "ABCDEFGHIJKLMNOPQRSTUVWXYZ";
const COLS = 31;
const ROWS = 39;
const colName = i => i < 26 ? LETTERS[i] : "A" + LETTERS[i - 26];

function cell(row, col) {
  if (row === 1 && col === 0) return '<td class="cursor"></td>';
  if (row === 2 && col === 1) return '<td class="name"><b>Vendedor</b></td>';
  if (row === 2 && col >= 2 && col <= 13) return `<td class="month">${months[col - 2]}</td>`;
  const entry = sales[row - 3];
  if (entry && col === 1) return `<td class="name">${entry[0]}</td>`;
  if (entry && col >= 2 && col <= 13) return `<td class="num">${entry[col - 1]}.000</td>`;
  return "<td></td>";
}

let html = '<colgroup><col class="c-row"><col class="c-a"><col class="c-b"><col span="12" class="c-month"><col span="17" class="c-wide"><col></colgroup>';
html += '<thead><tr><th class="corner"></th>';
for (let c = 0; c < COLS; c++) html += `<th scope="col"${c === 0 ? ' class="sel"' : ""}>${colName(c)}</th>`;
html += "<th></th></tr></thead><tbody>";
for (let r = 1; r <= ROWS; r++) {
  html += `<tr><th scope="row" class="rowno${r === 1 ? " sel" : ""}">${r < ROWS ? r : ""}</th>`;
  for (let c = 0; c <= COLS; c++) html += cell(r, c);
  html += "</tr>";
}
document.getElementById("grid").innerHTML = html + "</tbody>";
```
